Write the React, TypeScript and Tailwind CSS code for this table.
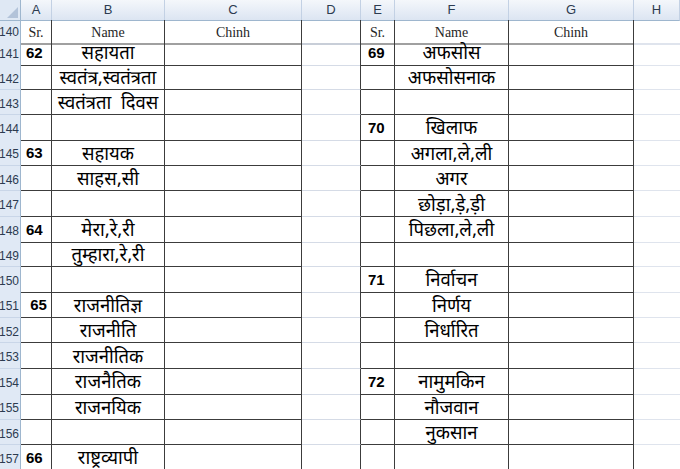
import React from "react";

type Row = { n: number; ln?: string; lname?: string; rn?: string; rname?: string; tall?: boolean };

const rows: Row[] = [
  { n: 141, ln: "62", lname: "सहायता", rn: "69", rname: "अफसोस" },
  { n: 142, lname: "स्वतंत्र,स्वतंत्रता", rname: "अफसोसनाक" },
  { n: 143, lname: "स्वतंत्रता  दिवस" },
  { n: 144, rn: "70", rname: "खिलाफ" },
  { n: 145, ln: "63", lname: "सहायक", rname: "अगला,ले,ली", tall: true },
  { n: 146, lname: "साहस,सी", rname: "अगर" },
  { n: 147, rname: "छोड़ा,ड़े,ड़ी", tall: true },
  { n: 148, ln: "64", lname: "मेरा,रे,री", rname: "पिछला,ले,ली" },
  { n: 149, lname: "तुम्हारा,रे,री" },
  { n: 150, rn: "71", rname: "निर्वाचन" },
  { n: 151, ln: " 65", lname: "राजनीतिज्ञ", rname: "निर्णय", tall: true },
  { n: 152, lname: "राजनीति", rname: "निर्धारित" },
  { n: 153, lname: "राजनीतिक", tall: true },
  { n: 154, lname: "राजनैतिक", rn: "72", rname: "नामुमकिन" },
  { n: 155, lname: "राजनयिक", rname: "नौजवान", tall: true },
  { n: 156, rname: "नुकसान" },
  { n: 157, ln: "66", lname: "राष्ट्रव्यापी" },
];

const GRID =
  "grid grid-cols-[21px_31px_113px_137px_59px_34px_114px_125px_46px]";
const HINDI =
  "font-['Noto_Sans_Devanagari','Lohit_Devanagari','Mangal','Noto_Sans',sans-serif] text-[18.5px] leading-[18px] text-black";
const NUM = "font-['Liberation_Sans',Arial,sans-serif] font-bold text-[15px] text-black whitespace-pre";
const SERIF = "font-['Liberation_Serif','Times_New_Roman',serif] text-[14px] text-[#262626]";
const HEAD = "font-['Liberation_Sans',Arial,sans-serif] text-[12px] text-[#2c3b50]";

export default function App() {
  return (
    <div className="w-[680px] h-[469px] overflow-hidden bg-white">
      {/* column headers */}
      <div className={`${GRID} h-[20px]`}>
        <div className="relative bg-[#dfe8f4] border-b border-r border-[#9eb6ce]">
          <svg className="absolute right-[2px] bottom-[2px]" width="11" height="11" viewBox="0 0 11 11">
            <polygon points="11,0 11,11 0,11" fill="#b3c3d9" />
          </svg>
        </div>
        {["A", "B", "C", "D", "E", "F", "G", "H"].map((c) => (
          <div
            key={c}
            className={`flex items-center justify-center bg-gradient-to-b from-[#f4f7fb] to-[#dce5f2] border-b border-r border-b-[#9eb6ce] border-r-[#c3d1e4] ${HEAD} text-[13px]`}
          >
            {c}
          </div>
        ))}
      </div>

      {/* row 140 */}
      <div className={`${GRID} h-[20px]`}>
        <div className={`flex items-center justify-end pr-[1px] bg-[#e0e9f5] border-b border-r border-b-[#c9d6e8] border-r-[#9eb6ce] ${HEAD}`}>
          140
        </div>
        <div className={`flex items-center justify-center pt-[2px] border-r border-r-[#3c3c3c] border-b-2 border-b-[#a0a0a0] ${SERIF}`}>Sr.</div>
        <div className={`flex items-center justify-center pt-[2px] border-r border-r-[#3c3c3c] border-b-2 border-b-[#a0a0a0] ${SERIF}`}>Name</div>
        <div className={`flex items-center justify-center pt-[2px] border-r border-r-[#3c3c3c] border-b-2 border-b-[#a0a0a0] ${SERIF}`}>Chinh</div>
        <div className="border-r border-r-[#3c3c3c] border-b-2 border-b-[#c8ced8]"></div>
        <div className={`flex items-center justify-center pt-[2px] border-r border-r-[#3c3c3c] border-b-2 border-b-[#a0a0a0] ${SERIF}`}>Sr.</div>
        <div className={`flex items-center justify-center pt-[2px] border-r border-r-[#3c3c3c] border-b-2 border-b-[#a0a0a0] ${SERIF}`}>Name</div>
        <div className={`flex items-center justify-center pt-[2px] border-r border-r-[#3c3c3c] border-b-2 border-b-[#a0a0a0] ${SERIF}`}>Chinh</div>
        <div className="border-b-2 border-b-[#dfe4ed]"></div>
      </div>

      {rows.map((r) => (
        <div key={r.n} className={`${GRID} ${r.tall ? "h-[26px]" : "h-[25px]"}`}>
          <div className={`flex items-center justify-end pr-[1px] pt-[3px] bg-[#e0e9f5] border-b border-r border-b-[#c9d6e8] border-r-[#9eb6ce] ${HEAD}`}>
            {r.n}
          </div>
          <div className={`flex items-center pl-[5px] pt-[2px] border-r border-b border-[#3c3c3c] ${NUM}`}>{r.ln ?? ""}</div>
          <div className={`flex items-center justify-center pt-[6px] border-r border-b border-[#3c3c3c] whitespace-pre ${HINDI}`}>
            {r.lname ?? ""}
          </div>
          <div className="border-r border-b border-[#3c3c3c]"></div>
          <div className="border-r border-r-[#3c3c3c] border-b border-b-[#d5dbe6]"></div>
          <div className={`flex items-center pl-[7px] pt-[2px] border-r border-b border-[#3c3c3c] ${NUM}`}>{r.rn ?? ""}</div>
          <div className={`flex items-center justify-center pt-[6px] border-r border-b border-[#3c3c3c] whitespace-pre ${HINDI}`}>
            {r.rname ?? ""}
          </div>
          <div className="border-r border-b border-[#3c3c3c]"></div>
          <div className="border-b border-b-[#dfe4ed]"></div>
        </div>
      ))}
    </div>
  );
}
